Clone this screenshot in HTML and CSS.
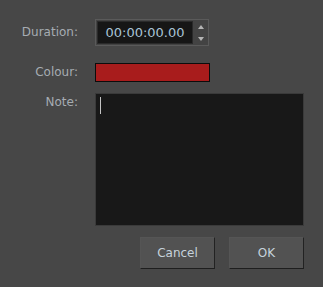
FILE: index.html
```html
<!DOCTYPE html>
<html lang="en">
<head>
    <meta charset="UTF-8">
    <title>Marker</title>
    <link rel="stylesheet" href="styles.css">
</head>
<body>
    <div class="dialog">
        <div class="row duration-row">
            <label class="label">Duration:</label>
            <div class="spinbox">
                <div class="spin-field">00:00:00.00</div>
                <div class="spin-arrows">
                    <span class="arrow up"></span>
                    <span class="arrow down"></span>
                </div>
            </div>
        </div>
        <div class="row colour-row">
            <label class="label">Colour:</label>
            <div class="swatch"></div>
        </div>
        <div class="row note-row">
            <label class="label">Note:</label>
            <div class="note"><span class="caret"></span></div>
        </div>
        <div class="buttons">
            <button class="btn">Cancel</button>
            <button class="btn">OK</button>
        </div>
    </div>
</body>
</html>
```

FILE: styles.css
```css
body {
    margin: 0;
    background-color: #474747;
    font-family: "DejaVu Sans", sans-serif;
    font-size: 12px;
    height: 287px;
    overflow: hidden;
}
.dialog {
    padding-top: 19px;
}
.row {
    display: grid;
    grid-template-columns: 78px 1fr;
    column-gap: 17px;
}
.label {
    text-align: right;
    color: #a6acb2;
}
.duration-row .label {
    line-height: 27px;
}
.colour-row {
    margin-top: 17px;
}
.colour-row .label {
    line-height: 19px;
}
.note-row {
    margin-top: 11px;
}
.note-row .label {
    line-height: 16px;
    padding-top: 1px;
}
.spinbox {
    display: flex;
    width: 112px;
    height: 25px;
    border: 1px solid #5a5a5a;
    background-color: #434343;
}
.spin-field {
    width: 94px;
    margin: 1px;
    border: 1px solid #2a2a2a;
    background-color: #161616;
    color: #a9c4d6;
    font-size: 13px;
    line-height: 21px;
    text-align: center;
}
.spin-arrows {
    flex: 1;
    display: flex;
    flex-direction: column;
    align-items: center;
    justify-content: space-between;
    padding: 5px 0 4px;
}
.arrow {
    width: 0;
    height: 0;
    border-left: 3px solid transparent;
    border-right: 3px solid transparent;
}
.arrow.up {
    border-bottom: 4px solid #b5b5b5;
}
.arrow.down {
    border-top: 4px solid #b5b5b5;
}
.swatch {
    width: 113px;
    height: 17px;
    border: 1px solid #0c0c0c;
    background-color: #a81c1c;
}
.note {
    width: 207px;
    height: 131px;
    border: 1px solid #3a3a3a;
    background-color: #181818;
}
.caret {
    display: block;
    width: 1px;
    height: 17px;
    margin: 3px 0 0 4px;
    background-color: #c4c4c4;
}
.buttons {
    display: flex;
    gap: 14px;
    margin-top: 11px;
    padding-left: 140px;
}
.btn {
    width: 75px;
    height: 32px;
    padding: 0;
    border: 1px solid #555;
    border-right-color: #222;
    border-bottom-color: #1e1e1e;
    background-color: #525252;
    color: #c6d2dc;
    font-family: "DejaVu Sans", sans-serif;
    font-size: 12px;
}
```
